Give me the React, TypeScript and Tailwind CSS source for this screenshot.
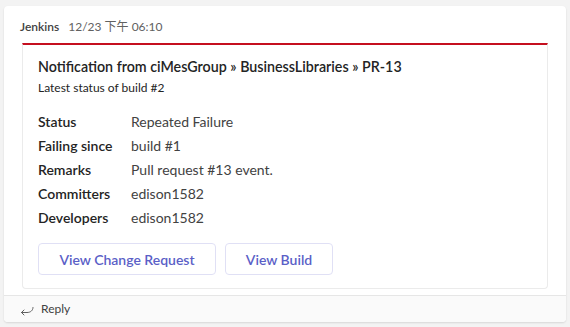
import React from 'react';

const facts: [string, string][] = [
  ['Status', 'Repeated Failure'],
  ['Failing since', 'build #1'],
  ['Remarks', 'Pull request #13 event.'],
  ['Committers', 'edison1582'],
  ['Developers', 'edison1582'],
];

const App: React.FC = () => {
  return (
    <div
      className="w-[570px] h-[327px] bg-[#f3f3f3] pt-[6px] pl-[4px]"
      style={{ fontFamily: '"Segoe UI", Lato, "Noto Sans CJK TC", sans-serif' }}
    >
      <div className="w-[562px] h-[316px] bg-white rounded-[4px] shadow-[0_1px_2px_rgba(0,0,0,0.12)] flex flex-col overflow-hidden">
        {/* Header */}
        <div className="flex items-baseline gap-[9px] pl-[16px] pt-[12px] h-[37px] text-[12px]">
          <span className="font-semibold text-[#424242]">Jenkins</span>
          <span className="text-[#616161]">12/23 下午 06:10</span>
        </div>

        {/* Card */}
        <div className="ml-[18px] w-[526px] h-[246px] border-t-[2px] border-t-[#c50f1f] border-x border-b border-[#ebebeb] rounded-b-[4px] px-[15px] pt-[12px]">
          <div className="text-[14.25px] font-semibold text-[#242424] leading-[20px]">
            Notification from ciMesGroup » BusinessLibraries » PR-13
          </div>
          <div className="text-[12px] text-[#242424] leading-[16px] mt-[3px]">Latest status of build #2</div>

          <div className="mt-[14px] grid grid-cols-[93px_1fr] text-[14px] leading-[24px]">
            {facts.map(([k, v]) => (
              <React.Fragment key={k}>
                <span className="font-semibold text-[#242424]">{k}</span>
                <span className="text-[#424242]">{v}</span>
              </React.Fragment>
            ))}
          </div>

          <div className="flex gap-[9px] mt-[13px]">
            <button className="w-[178px] h-[32px] border border-[#e0e0f5] rounded-[4px] text-[14px] font-semibold text-[#5b5fc7]">
              View Change Request
            </button>
            <button className="w-[108px] h-[32px] border border-[#e0e0f5] rounded-[4px] text-[14px] font-semibold text-[#5b5fc7]">
              View Build
            </button>
          </div>
        </div>

        {/* Reply */}
        <div className="mt-auto h-[27px] bg-[#fafafa] border-t border-[#e6e6e6] flex items-center pl-[15px] gap-[6px] text-[12px] text-[#424242]">
          <svg width="16" height="16" viewBox="0 0 16 16" fill="none" stroke="#616161" strokeWidth="1" strokeLinecap="round" strokeLinejoin="round">
            <path d="M14 6.5c0 3-2.5 5-6 5H2.5" />
            <path d="M5 9l-2.5 2.5L5 14" />
          </svg>
          <span>Reply</span>
        </div>
      </div>
    </div>
  );
};

export default App;
